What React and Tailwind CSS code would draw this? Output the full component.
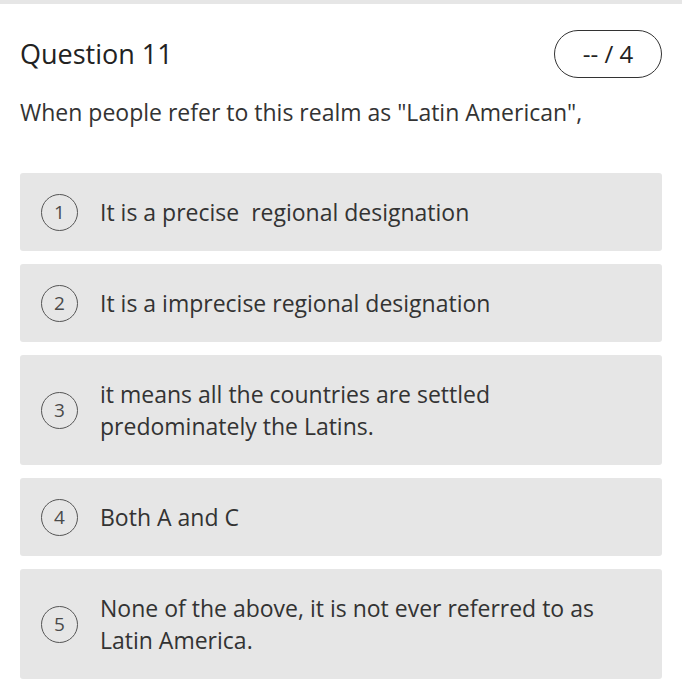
import React from 'react'

const options = [
  "It is a precise  regional designation",
  "It is a imprecise regional designation",
  "it means all the countries are settled predominately the Latins.",
  "Both A and C",
  "None of the above, it is not ever referred to as Latin America.",
]

function Option({ n, text }) {
  return (
    <div className="flex items-center bg-[#e6e6e6] rounded-[3px] pl-[21px] pr-[40px] py-[23px]">
      <div className="shrink-0 -my-[4px] w-[37px] h-[37px] rounded-full border-[1.5px] border-[#555] flex items-center justify-center text-[19px] text-[#4a4a4a]">
        {n}
      </div>
      <p className="ml-[22px] text-[23px] leading-[32px] text-[#333] whitespace-pre-wrap">{text}</p>
    </div>
  )
}

export default function App() {
  return (
    <div className="w-[682px] min-h-[700px] bg-white" style={{ fontFamily: '"Open Sans", "Noto Sans", sans-serif' }}>
      <div className="h-[4px] bg-[#e6e6e6]" />
      <div className="px-[20px]">
        <div className="flex items-center justify-between mt-[26px] h-[48px]">
          <h1 className="text-[27px] text-[#222]">Question 11</h1>
          <div className="w-[108px] h-[48px] rounded-full border-[1.5px] border-[#333] flex items-center justify-center text-[24px] text-[#222]">
            -- / 4
          </div>
        </div>
        <p className="mt-[18px] text-[23px] leading-[32px] text-[#333]">
          When people refer to this realm as "Latin American",
        </p>
        <div className="mt-[45px] flex flex-col gap-[13px]">
          {options.map((t, i) => (
            <Option key={i} n={i + 1} text={t} />
          ))}
        </div>
      </div>
    </div>
  )
}
